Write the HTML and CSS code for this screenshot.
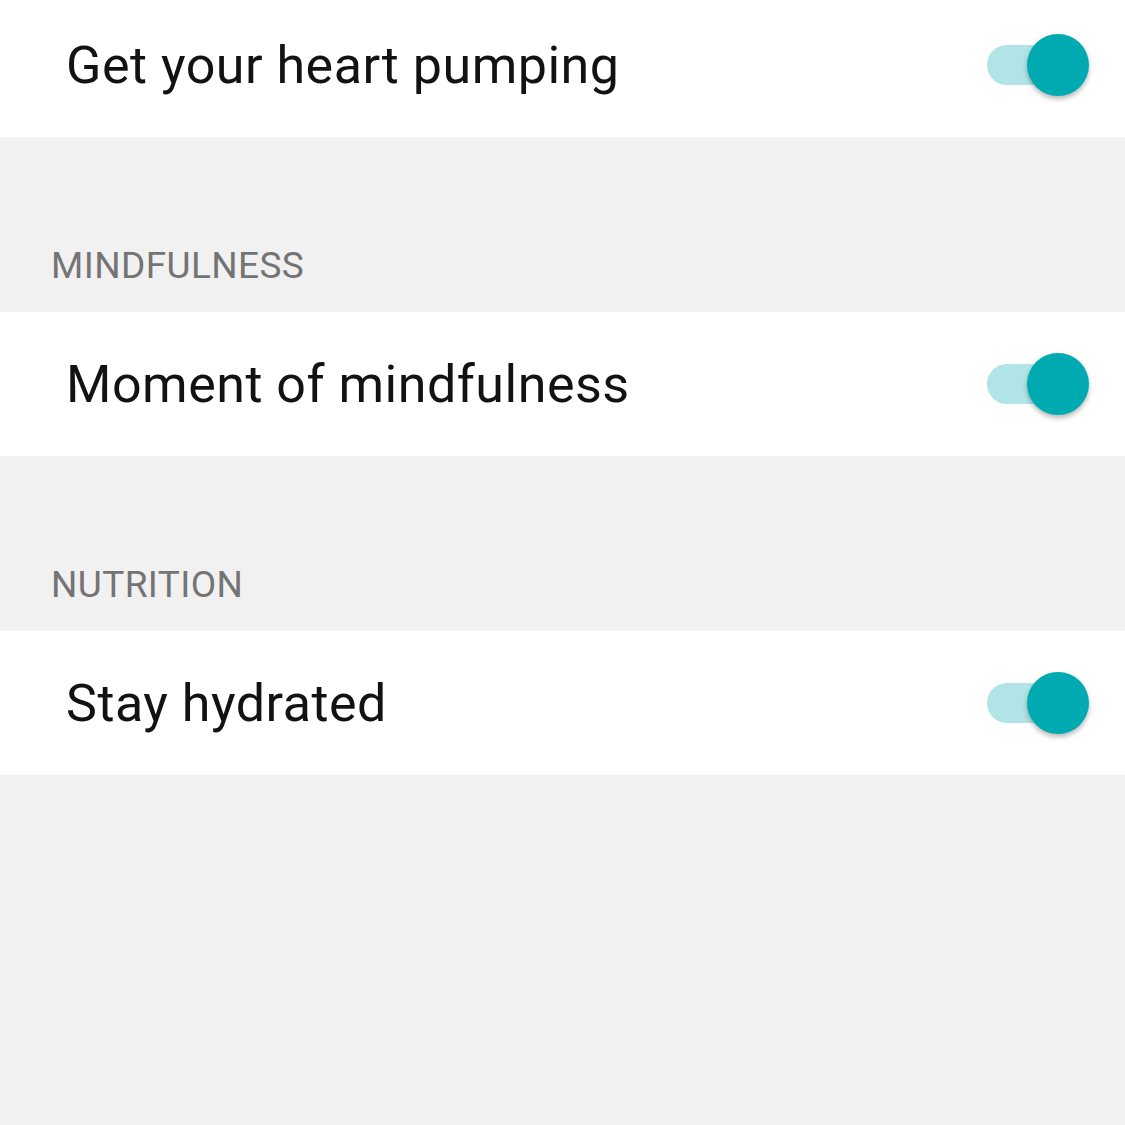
FILE: index.html
```html
<!DOCTYPE html>
<html lang="en">
<head>
  <meta charset="UTF-8">
  <meta name="viewport" content="width=device-width, initial-scale=1.0">
  <title>Reminders</title>
  <link rel="stylesheet" href="styles.css">
</head>
<body>
  <div class="settings">
    <div class="row row-first">
      <span class="row-label">Get your heart pumping</span>
      <label class="switch">
        <input type="checkbox" checked>
        <span class="track"></span>
        <span class="thumb"></span>
      </label>
    </div>

    <div class="section-header">MINDFULNESS</div>
    <div class="row">
      <span class="row-label">Moment of mindfulness</span>
      <label class="switch">
        <input type="checkbox" checked>
        <span class="track"></span>
        <span class="thumb"></span>
      </label>
    </div>

    <div class="section-header">NUTRITION</div>
    <div class="row">
      <span class="row-label">Stay hydrated</span>
      <label class="switch">
        <input type="checkbox" checked>
        <span class="track"></span>
        <span class="thumb"></span>
      </label>
    </div>
  </div>
</body>
</html>
```

FILE: styles.css
```css
body {
  margin: 0;
  padding: 0;
  background: #f1f1f1;
  font-family: Roboto, 'Noto Sans', sans-serif;
  min-height: 100vh;
  overflow: hidden;
}

.settings {
  display: flex;
  flex-direction: column;
}

.row {
  height: 144px;
  background: #fff;
  display: flex;
  align-items: center;
  justify-content: space-between;
  padding: 0 36px 0 66px;
}

/* first row is scrolled partly out of view */
.row-first {
  margin-top: -7px;
}

.row-label {
  font-size: 52px;
  letter-spacing: 0.5px;
  color: #121212;
}

.section-header {
  height: 175px;
  box-sizing: border-box;
  display: flex;
  align-items: flex-end;
  padding: 0 0 28px 51px;
  font-size: 37px;
  line-height: 37px;
  letter-spacing: 0.4px;
  color: #747474;
}

.switch {
  position: relative;
  width: 102px;
  height: 62px;
  cursor: pointer;
}

.switch input {
  display: none;
}

.track {
  position: absolute;
  left: 0;
  top: 11px;
  width: 90px;
  height: 40px;
  border-radius: 20px;
  background: #b1e4e6;
}

.thumb {
  position: absolute;
  right: 0;
  top: 0;
  width: 62px;
  height: 62px;
  border-radius: 50%;
  background: #00aab1;
  box-shadow: 0 3px 5px rgba(0, 0, 0, 0.28);
}
```
